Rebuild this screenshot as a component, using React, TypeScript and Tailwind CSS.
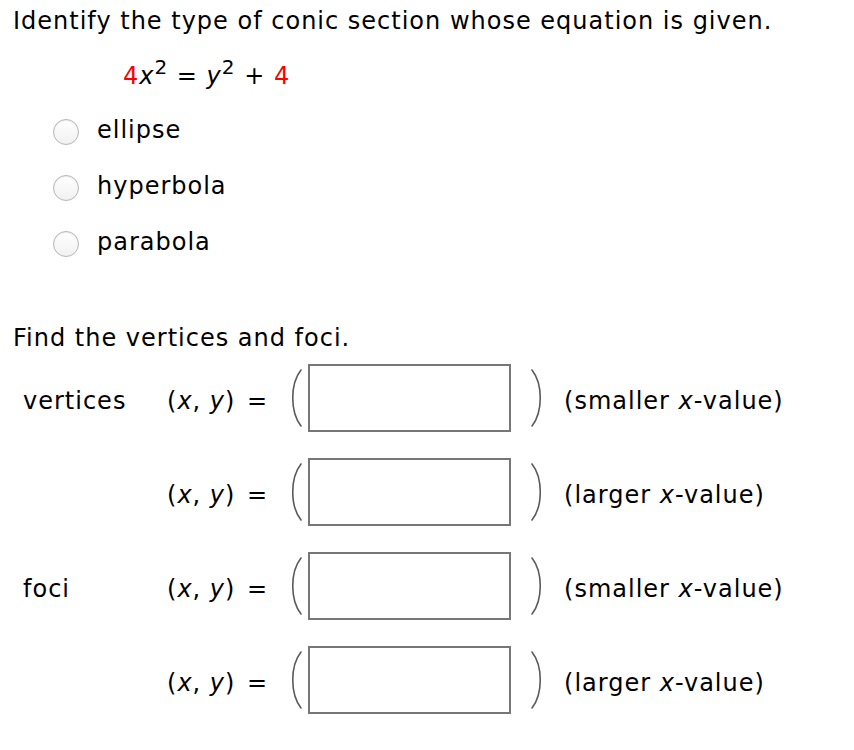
import React from "react";

const FONT = { fontFamily: '"DejaVu Sans", Verdana, sans-serif' };

function Paren({ side }: { side: "l" | "r" }) {
  const d = side === "l" ? "M13 2 C2 16, 2 44, 13 58" : "M3 2 C14 16, 14 44, 3 58";
  return (
    <svg width="16" height="60" viewBox="0 0 16 60" className="shrink-0">
      <path d={d} fill="none" stroke="#5a5a5a" strokeWidth="1.6" strokeLinecap="round" />
    </svg>
  );
}

function Radio() {
  return (
    <span className="inline-block h-[26px] w-[26px] shrink-0 rounded-full border border-[#b5b5b5] bg-gradient-to-b from-white to-[#f1f1f1] shadow-[inset_0_1px_1px_rgba(0,0,0,0.08)]" />
  );
}

type Row = { label: string; note: string };

const ROWS: Row[] = [
  { label: "vertices", note: "smaller" },
  { label: "", note: "larger" },
  { label: "foci", note: "smaller" },
  { label: "", note: "larger" },
];

export default function App() {
  return (
    <div className="min-h-[750px] w-[854px] bg-white text-[24px] leading-none tracking-[1px] text-black" style={FONT}>
      <div className="pl-[13px] pt-[9px]">Identify the type of conic section whose equation is given.</div>

      <div className="pl-[123px] pt-[31px]">
        <span className="text-[#ff0000]">4</span>
        <i>x</i>
        <sup className="text-[20px]">2</sup> = <i>y</i>
        <sup className="text-[20px]">2</sup> + <span className="text-[#ff0000]">4</span>
      </div>

      <div className="flex flex-col gap-[30px] pl-[53px] pt-[31px]">
        {["ellipse", "hyperbola", "parabola"].map((o) => (
          <label key={o} className="flex items-center gap-[18px]">
            <Radio />
            <span className="-mt-[4px]">{o}</span>
          </label>
        ))}
      </div>

      <div className="pl-[13px] pt-[69px]">Find the vertices and foci.</div>

      <div className="flex flex-col gap-[26px] pt-[14px]">
        {ROWS.map((r, i) => (
          <div key={i} className="flex h-[68px] items-center">
            <span className="mt-[6px] w-[167px] pl-[23px]">{r.label}</span>
            <span className="mt-[6px] w-[80px]">
              (<i>x</i>, <i>y</i>)
            </span>
            <span className="mt-[6px] w-[41px]">=</span>
            <Paren side="l" />
            <span className="ml-[4px] h-[68px] w-[203px] border-2 border-[#777]" />
            <span className="ml-[18px]">
              <Paren side="r" />
            </span>
            <span className="ml-[19px] mt-[6px]">
              ({r.note} <i>x</i>-value)
            </span>
          </div>
        ))}
      </div>
    </div>
  );
}
